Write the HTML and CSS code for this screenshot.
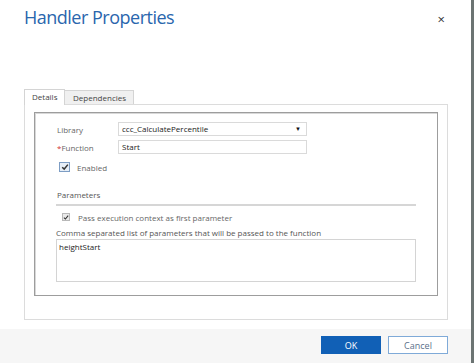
FILE: index.html
```html
<!DOCTYPE html>
<html>
<head>
<meta charset="utf-8">
<link rel="stylesheet" href="styles.css">
</head>
<body>
<div class="dialog">
  <div class="main">
    <div class="header">
      <h1 class="title">Handler Properties</h1>
      <span class="close">×</span>
    </div>
    <div class="content">
      <div class="tabs">
        <div class="tab active">Details</div>
        <div class="tab">Dependencies</div>
      </div>
      <div class="panel">
        <div class="box">
          <div class="row">
            <span class="label">Library</span>
            <div class="field select"><span>ccc_CalculatePercentile</span><span class="arrow">▼</span></div>
          </div>
          <div class="row">
            <span class="label"><span class="req">*</span>Function</span>
            <div class="field">Start</div>
          </div>
          <div class="check-row enabled">
            <span class="cb big"><svg viewBox="0 0 10 10" width="8" height="8"><path d="M1.5 5.2 L4 7.6 L8.6 2" fill="none" stroke="#333" stroke-width="1.8"/></svg></span>
            <span class="cb-label">Enabled</span>
          </div>
          <div class="section">Parameters</div>
          <div class="check-row pass">
            <span class="cb small"><svg viewBox="0 0 10 10" width="7" height="7"><path d="M1.5 5.2 L4 7.6 L8.6 2" fill="none" stroke="#333" stroke-width="1.8"/></svg></span>
            <span class="cb-label">Pass execution context as first parameter</span>
          </div>
          <div class="hint">Comma separated list of parameters that will be passed to the function</div>
          <div class="textarea">heightStart</div>
        </div>
      </div>
    </div>
  </div>
  <div class="footer">
    <button class="btn ok">OK</button>
    <button class="btn cancel">Cancel</button>
  </div>
</div>
</body>
</html>
```
FILE: styles.css
```css
html, body {
  margin: 0;
  padding: 0;
  background: #ffffff;
}
body {
  width: 474px;
  height: 363px;
  overflow: hidden;
  font-family: "Open Sans", "Noto Sans", sans-serif;
  color: #444;
}
.dialog {
  width: 471px;
  height: 363px;
  border-right: 3px solid #6c7473;
  display: flex;
  flex-direction: column;
}
.main {
  flex: 1;
  display: flex;
  flex-direction: column;
}
.header {
  height: 89px;
  display: flex;
  justify-content: space-between;
  align-items: flex-start;
}
.title {
  margin: 5px 0 0 24px;
  font-size: 18px;
  font-weight: 400;
  color: #2a66ad;
  letter-spacing: -0.5px;
}
.close {
  margin: 10px 26px 0 0;
  font-size: 13px;
  color: #333;
}
.content {
  padding: 0 23px 0 24px;
}
.tabs {
  display: flex;
  height: 15px;
}
.tab {
  font-size: 8px;
  line-height: 14px;
  padding: 0 6px;
  border: 1px solid #d4d4d4;
  border-bottom: none;
  color: #444;
  box-sizing: border-box;
  height: 15px;
}
.tab.active {
  width: 41px;
  padding-left: 7px;
  background: #fff;
  position: relative;
  z-index: 1;
  height: 16px;
}
.tab:not(.active) {
  width: 69px;
  padding-left: 8px;
  background: #f0f0f0;
  margin-top: 1px;
  height: 14px;
  border-left: none;
}
.panel {
  border: 1px solid #dcdcdc;
  height: 216px;
  box-sizing: border-box;
  padding: 7px 9px 0 9px;
}
.box {
  border: 1px solid #9d9d9d;
  box-shadow: inset 1px 1px 0 #d8d8d8;
  height: 184px;
  box-sizing: border-box;
  padding: 9px 21px 0 21px;
  display: flex;
  flex-direction: column;
}
.row {
  display: flex;
  align-items: center;
  height: 14px;
  margin-bottom: 4px;
}
.label {
  width: 61px;
  font-size: 8px;
  color: #666;
  padding-left: 1px;
}
.req {
  color: #d03030;
}
.field {
  width: 189px;
  height: 14px;
  box-sizing: border-box;
  border: 1px solid #dadada;
  font-size: 8px;
  line-height: 12px;
  padding-left: 3px;
  color: #222;
  display: flex;
  justify-content: space-between;
}
.arrow {
  font-size: 6px;
  padding-right: 5px;
  color: #111;
}
.check-row {
  display: flex;
  align-items: center;
}
.check-row.enabled {
  margin-top: 3px;
  margin-left: 3px;
  height: 12px;
}
.cb {
  display: flex;
  align-items: center;
  justify-content: center;
  box-sizing: border-box;
}
.cb.big {
  width: 11px;
  height: 10px;
  border: 1px solid #7d9dc4;
  background: #e6eef7;
}
.cb.small {
  width: 8px;
  height: 8px;
  border: 1px solid #b8b8b8;
  background: #eaeaea;
  margin-left: 6px;
}
.cb-label {
  font-size: 8px;
  color: #666;
  margin-left: 7px;
}
.pass .cb-label {
  margin-left: 8px;
}
.section {
  margin-top: 16px;
  font-size: 8px;
  color: #555;
  height: 15px;
  line-height: 12px;
  border-bottom: 2px solid #d6d6d6;
  padding-left: 1px;
}
.check-row.pass {
  margin-top: 5px;
  height: 12px;
}
.hint {
  margin-top: 4px;
  font-size: 8px;
  color: #555;
  line-height: 11px;
}
.textarea {
  margin-top: 1px;
  height: 43px;
  box-sizing: border-box;
  border: 1px solid #d4d4d4;
  font-size: 8px;
  line-height: 11px;
  padding: 1px 2px;
  color: #222;
}
.footer {
  height: 34px;
  background: #f6f6f6;
  display: flex;
  justify-content: flex-end;
  align-items: flex-start;
  padding: 7px 23px 0 0;
  box-sizing: border-box;
  gap: 7px;
}
.btn {
  width: 60px;
  height: 18px;
  font-family: "Open Sans", "Noto Sans", sans-serif;
  font-size: 9px;
  padding: 0;
  box-sizing: border-box;
}
.ok {
  background: #1160b6;
  border: 1px solid #1160b6;
  color: #ffffff;
}
.cancel {
  background: #ffffff;
  border: 1px solid #7faad8;
  color: #5a6f8a;
}
```
